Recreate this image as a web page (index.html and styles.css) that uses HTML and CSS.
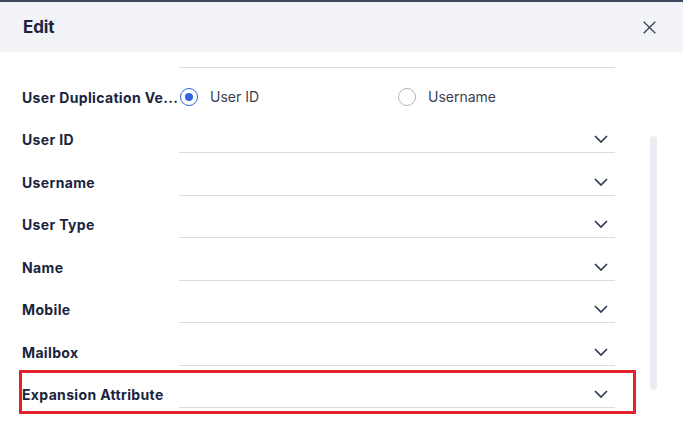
FILE: index.html
```html
<!DOCTYPE html>
<html lang="en">
<head>
    <meta charset="UTF-8">
    <meta name="viewport" content="width=device-width, initial-scale=1.0">
    <title>Edit</title>
    <link rel="stylesheet" href="styles.css">
</head>
<body>

    <div class="topline"></div>

    <div class="header">
        <h1>Edit</h1>
        <button class="close-btn" aria-label="Close">
            <svg width="13" height="13" viewBox="0 0 13 13">
                <path d="M0.7 0.7L12.3 12.3M12.3 0.7L0.7 12.3" stroke="#3c4157" stroke-width="1.3" fill="none"/>
            </svg>
        </button>
    </div>

    <div class="content">
        <div class="form">
            <div class="row-partial"><div class="field"></div></div>

            <div class="row">
                <span class="label">User Duplication Ve...</span>
                <div class="field no-line">
                    <label class="radio-option">
                        <span class="radio checked"></span> User ID
                    </label>
                    <label class="radio-option">
                        <span class="radio"></span> Username
                    </label>
                </div>
            </div>

            <div class="row">
                <span class="label">User ID</span>
                <div class="field select"><svg class="chevron" viewBox="0 0 14 8"><path d="M1 1l6 6 6-6"/></svg></div>
            </div>
            <div class="row">
                <span class="label">Username</span>
                <div class="field select"><svg class="chevron" viewBox="0 0 14 8"><path d="M1 1l6 6 6-6"/></svg></div>
            </div>
            <div class="row">
                <span class="label">User Type</span>
                <div class="field select"><svg class="chevron" viewBox="0 0 14 8"><path d="M1 1l6 6 6-6"/></svg></div>
            </div>
            <div class="row">
                <span class="label">Name</span>
                <div class="field select"><svg class="chevron" viewBox="0 0 14 8"><path d="M1 1l6 6 6-6"/></svg></div>
            </div>
            <div class="row">
                <span class="label">Mobile</span>
                <div class="field select"><svg class="chevron" viewBox="0 0 14 8"><path d="M1 1l6 6 6-6"/></svg></div>
            </div>
            <div class="row">
                <span class="label">Mailbox</span>
                <div class="field select"><svg class="chevron" viewBox="0 0 14 8"><path d="M1 1l6 6 6-6"/></svg></div>
            </div>
            <div class="row row-highlight">
                <span class="label">Expansion Attribute</span>
                <div class="field select"><svg class="chevron" viewBox="0 0 14 8"><path d="M1 1l6 6 6-6"/></svg></div>
            </div>
        </div>

        <div class="scrollbar"><div class="thumb"></div></div>
    </div>

</body>
</html>
```

FILE: styles.css
```css
:root {
    --text-color: #1a2440;
    --line-color: #dcdde3;
    --header-bg: #f2f3f7;
    --primary-color: #2f66e0;
    --highlight-color: #e3202b;
}

body {
    font-family: Inter, 'Noto Sans', sans-serif;
    color: var(--text-color);
    background: white;
    margin: 0;
    width: 683px;
    height: 429px;
    overflow: hidden;
}

.topline {
    height: 2px;
    background: #3e4a5f;
}

.header {
    height: 50px;
    background: var(--header-bg);
    display: flex;
    align-items: center;
    justify-content: space-between;
    padding: 0 27px 0 23px;
}

.header h1 {
    margin: 0;
    font-size: 17px;
    font-weight: 700;
    letter-spacing: -0.1px;
}

.close-btn {
    border: none;
    background: none;
    padding: 0;
    width: 13px;
    height: 13px;
    display: flex;
    cursor: pointer;
}

.content {
    display: flex;
}

.form {
    width: 593px;
    padding-left: 22px;
}

.row-partial {
    display: grid;
    grid-template-columns: 157px 436px;
}

.row-partial .field {
    grid-column: 2;
    height: 15px;
}

.row {
    display: grid;
    grid-template-columns: 157px 436px;
    align-items: end;
    height: 42.5px;
}

.label {
    font-size: 14px;
    font-weight: 700;
    letter-spacing: 0.35px;
    line-height: 26px;
    white-space: nowrap;
    overflow: hidden;
}

.field {
    height: 26px;
    border-bottom: 1px solid var(--line-color);
    display: flex;
    align-items: center;
}

.field.no-line {
    border-bottom-color: transparent;
}

.field.select {
    justify-content: flex-end;
    padding-right: 7px;
}

.chevron {
    width: 14px;
    height: 8px;
    fill: none;
    stroke: #2d3a56;
    stroke-width: 1.7;
}

.radio-option {
    display: flex;
    align-items: center;
    gap: 12px;
    width: 218px;
    font-size: 14px;
    color: #3b3f4f;
    padding-left: 1px;
}

.radio {
    width: 18px;
    height: 18px;
    box-sizing: border-box;
    border: 1px solid #b3b6c0;
    border-radius: 50%;
    display: flex;
    align-items: center;
    justify-content: center;
}

.radio.checked {
    border: 1.5px solid var(--primary-color);
}

.radio.checked::before {
    content: '';
    width: 8px;
    height: 8px;
    border-radius: 50%;
    background: var(--primary-color);
}

.row-highlight {
    position: relative;
}

.row-highlight::after {
    content: '';
    position: absolute;
    top: 4.5px;
    bottom: -6px;
    left: -3px;
    right: -21px;
    border: 3px solid var(--highlight-color);
}

.scrollbar {
    margin-left: 35px;
    padding-top: 84px;
}

.thumb {
    width: 7px;
    height: 254px;
    border-radius: 4px;
    background: #ecedf3;
}
```
